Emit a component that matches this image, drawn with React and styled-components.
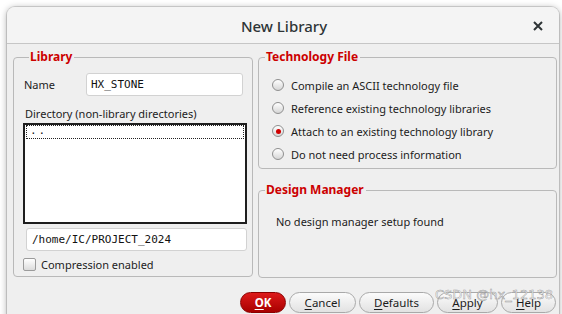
import styled, { createGlobalStyle, css } from "styled-components";

const GlobalStyle = createGlobalStyle`
  html, body {
    margin: 0;
    padding: 0;
    background: #ffffff;
  }
  #root {
    width: 562px;
    height: 314px;
    overflow: hidden;
  }
`;

const Page = styled.div`
  height: 314px;
  padding: 7px 3px 0 7px;
  box-sizing: border-box;
  font-family: "Noto Sans", "Open Sans", sans-serif;
  font-size: 11px;
  color: #1c1c1c;
  position: relative;
`;

const Dialog = styled.div`
  height: 312px;
  background: #efefef;
  border-radius: 8px 8px 0 0;
  box-shadow: 0 1px 7px rgba(0, 0, 0, 0.35), 0 0 0 1px rgba(0, 0, 0, 0.12);
  display: flex;
  flex-direction: column;
  overflow: hidden;
`;

const TitleBar = styled.div`
  height: 36px;
  flex: none;
  background: #f4f4f4;
  border-bottom: 1px solid #c6c6c6;
  display: flex;
  align-items: center;
  justify-content: center;
  position: relative;
`;

const Title = styled.div`
  font-size: 15px;
  color: #2e3436;
  font-weight: 500;
  margin: 2px 0 0 2px;
`;

const Close = styled.div`
  position: absolute;
  right: 14px;
  top: 12px;
  width: 14px;
  height: 14px;
  display: flex;
  align-items: center;
  justify-content: center;
`;

const Body = styled.div`
  flex: none;
  height: 233px;
  display: grid;
  grid-template-columns: 240px 299px;
  column-gap: 5px;
  padding: 5px 0 0 6px;
  box-sizing: border-box;
  align-items: start;
`;

const Group = styled.fieldset`
  margin: 0;
  min-width: 0;
  border: 1px solid #b9b9b9;
  border-radius: 4px;
  padding: ${({ $pad }) => $pad || "0"};
  box-sizing: border-box;
  height: ${({ $h }) => $h}px;
`;

const Legend = styled.legend`
  color: #cc0000;
  font-weight: 700;
  font-size: 12px;
  line-height: 16px;
  padding: 0 2px 0 1px;
  margin-left: 6px;
`;

const RightCol = styled.div`
  display: flex;
  flex-direction: column;
  gap: 13px;
`;

const NameRow = styled.div`
  display: flex;
  align-items: center;
  height: 23px;
  margin-top: 8px;
  padding-left: 1px;
`;

const FieldLabel = styled.span`
  width: 62px;
`;

const TextBox = styled.div`
  background: #ffffff;
  border: 1px solid #d2d2d2;
  border-radius: 3px;
  height: 23px;
  box-sizing: border-box;
  display: flex;
  align-items: center;
  padding-left: ${({ $indent }) => $indent || 4}px;
  font-family: "DejaVu Sans Mono", "Liberation Mono", monospace;
  font-size: 11px;
  color: #111;
  width: ${({ $w }) => $w}px;
  margin-left: ${({ $ml }) => $ml || 0}px;
  margin-top: ${({ $mt }) => $mt || 0}px;
`;

const DirLabel = styled.div`
  margin-top: 10px;
  padding-left: 2px;
  line-height: 16px;
`;

const ListBox = styled.div`
  margin-top: 1px;
  width: 224px;
  height: 101px;
  box-sizing: border-box;
  border: 2px solid #1e1e1e;
  background: #ffffff;
  padding: 0 1px;
`;

const ListItem = styled.div`
  height: 14px;
  border: 1px dotted #222;
  box-sizing: border-box;
  font-family: "DejaVu Sans Mono", monospace;
  font-size: 11px;
  line-height: 9px;
  padding-left: 3px;
  letter-spacing: 2px;
`;

const CheckRow = styled.label`
  display: flex;
  align-items: center;
  gap: 5px;
  height: 14px;
  margin-top: 6px;
`;

const CheckBox = styled.span`
  width: 13px;
  height: 13px;
  box-sizing: border-box;
  border: 1px solid #9b9b9b;
  border-radius: 2px;
  background: linear-gradient(#ffffff, #dcdcdc);
`;

const RadioList = styled.div`
  display: flex;
  flex-direction: column;
  gap: 7px;
  padding: 12px 0 0 13px;
`;

const RadioRow = styled.label`
  display: flex;
  align-items: center;
  gap: 7px;
  height: 16px;
`;

const Radio = styled.span`
  width: 12px;
  height: 12px;
  box-sizing: border-box;
  border-radius: 50%;
  border: 1px solid #8f8f8f;
  background: linear-gradient(#ffffff, #d6d6d6);
  display: flex;
  align-items: center;
  justify-content: center;
  &::after {
    content: "";
    width: 5px;
    height: 5px;
    border-radius: 50%;
    background: ${({ $on }) => ($on ? "#d00000" : "transparent")};
  }
`;

const Note = styled.div`
  padding: 16px 0 0 17px;
`;

const ButtonRow = styled.div`
  display: flex;
  justify-content: flex-end;
  gap: 3px;
  padding: 0 3px 0 0;
  margin-top: 15px;
  flex: none;
`;

const Button = styled.button`
  height: 21px;
  width: ${({ $w }) => $w}px;
  border-radius: 11px;
  font-family: "Noto Sans", sans-serif;
  font-size: 11.5px;
  padding: 0;
  color: #1c1c1c;
  border: 1px solid #a9a9a9;
  background: linear-gradient(#fbfbfb, #e2e2e2);
  ${({ $primary }) =>
    $primary &&
    css`
      color: #ffffff;
      font-weight: 700;
      border-color: #8a0000;
      background: linear-gradient(#dd1a1a, #a80000);
    `}
  u {
    text-decoration-thickness: 1px;
    text-underline-offset: 2px;
  }
`;

const Watermark = styled.div`
  position: absolute;
  left: 435px;
  top: 287px;
  font-family: "DejaVu Sans", sans-serif;
  font-size: 13px;
  color: rgba(255, 255, 255, 0.9);
  -webkit-text-stroke: 0.5px rgba(120, 120, 120, 0.75);
  pointer-events: none;
`;

const radios = [
  "Compile an ASCII technology file",
  "Reference existing technology libraries",
  "Attach to an existing technology library",
  "Do not need process information",
];

const buttons = [
  { key: "O", rest: "K", w: 46, primary: true },
  { key: "C", rest: "ancel", w: 67 },
  { key: "D", rest: "efaults", w: 75 },
  { key: "A", rest: "pply", w: 61 },
  { key: "H", rest: "elp", w: 55 },
];

export default function App() {
  return (
    <Page>
      <GlobalStyle />
      <Dialog>
        <TitleBar>
          <Title>New Library</Title>
          <Close>
            <svg width="10" height="10" viewBox="0 0 10 10">
              <path d="M1 1 L9 9 M9 1 L1 9" stroke="#2e3436" strokeWidth="2" />
            </svg>
          </Close>
        </TitleBar>
        <Body>
          <Group $pad="0 4px 0 9px" $h={228}>
            <Legend>Library</Legend>
            <NameRow>
              <FieldLabel>Name</FieldLabel>
              <TextBox $w={157}>HX_STONE</TextBox>
            </NameRow>
            <DirLabel>Directory (non-library directories)</DirLabel>
            <ListBox>
              <ListItem>..</ListItem>
            </ListBox>
            <TextBox $w={221} $ml={3} $mt={4} $indent={5}>
              /home/IC/PROJECT_2024
            </TextBox>
            <CheckRow>
              <CheckBox />
              Compression enabled
            </CheckRow>
          </Group>
          <RightCol>
            <Group $h={120}>
              <Legend>Technology File</Legend>
              <RadioList>
                {radios.map((r, i) => (
                  <RadioRow key={r}>
                    <Radio $on={i === 2} />
                    {r}
                  </RadioRow>
                ))}
              </RadioList>
            </Group>
            <Group $h={96}>
              <Legend>Design Manager</Legend>
              <Note>No design manager setup found</Note>
            </Group>
          </RightCol>
        </Body>
        <ButtonRow>
          {buttons.map((b) => (
            <Button key={b.key} $w={b.w} $primary={b.primary}>
              <u>{b.key}</u>
              {b.rest}
            </Button>
          ))}
        </ButtonRow>
      </Dialog>
      <Watermark>CSDN @hx_12138</Watermark>
    </Page>
  );
}
